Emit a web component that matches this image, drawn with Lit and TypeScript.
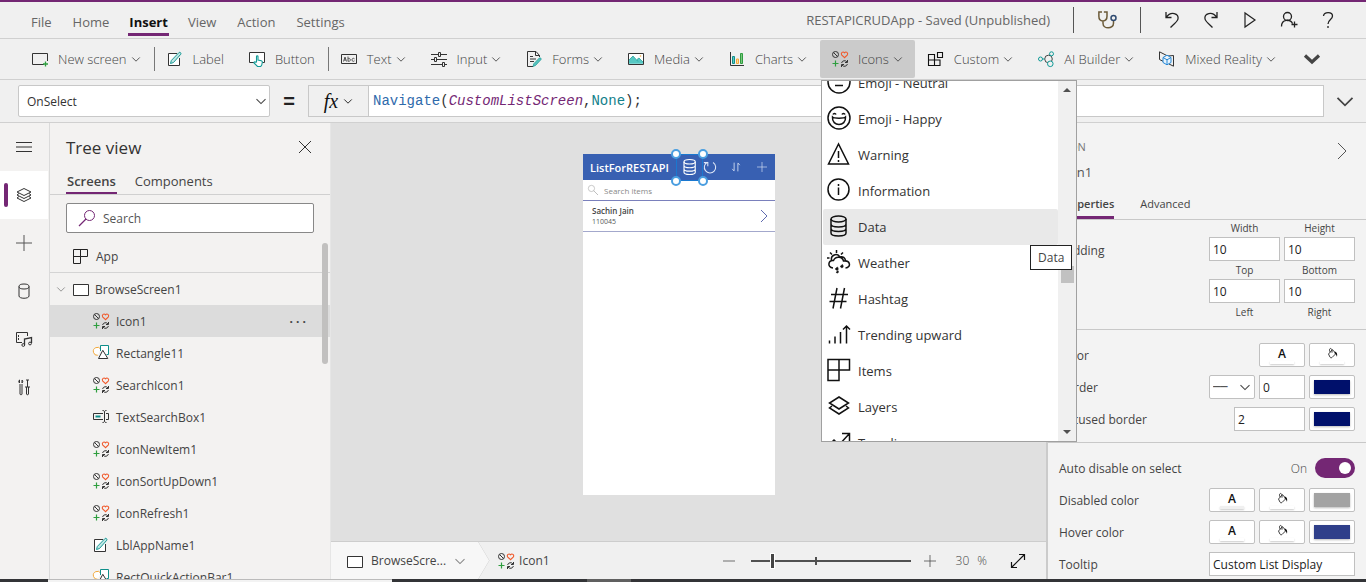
import { LitElement, html, svg, css, nothing } from "lit";
import { customElement, property, state } from "lit/decorators.js";
import { classMap } from "lit/directives/class-map.js";

const paths: Record<string, any> = {
  screen: svg`<path d="M.5 3.500h15v11H.5z" fill="#fff" stroke="#333"/>`,
  newScreen: svg`<path d="M12 13.500H.5V2.500h15V10" fill="none" stroke="#333"/><path d="M13.500 10.500v5M11 13h5" stroke="#2e9e3f" stroke-width="1.300"/>`,
  label: svg`<path d="M10 2.500H1.500v12h11V7" fill="#fff" stroke="#333"/><path d="M3.500 12.500l.8-3L12 1.500c1-.8 2.500.6 1.800 1.700L6.500 11.500z" fill="#bfe6e4" stroke="#1b9a96"/>`,
  button: svg`<path d="M5 11.500H.5v-10h15v10H13" fill="#fff" stroke="#333"/><path d="M7.500 11V5.500c0-1 1.500-1 1.500 0V9l3.300.8c.8.3 1.200.8 1 1.700l-.6 2.500-1 1.500H8.500L5 12c-.3-1 .7-1.400 1.300-.9z" fill="#fff" stroke="#0f9a96" stroke-width="1.100"/>`,
  text: svg`<path d="M.5 3.500h15v9H.5z" fill="none" stroke="#333"/><path d="M2.500 10.500L4 6l1.500 4.500M3 9h2M7 5.500v5M7 8c1-1.200 2.300-.6 2.300.8S8 11 7 9.800M13.500 7.800c-1.500-1.200-2.700 0-2.500 1.200.1 1.300 1.500 1.900 2.500.8" fill="none" stroke="#555"/>`,
  input: svg`<path d="M0 3.500h7M10 3.500h6M0 8.500h3M6 8.500h10M0 13.500h11M14 13.500h2" stroke="#333"/><path d="M7.500 1.500h2v4h-2zM3.500 6.500h2v4h-2zM11.500 11.500h2v4h-2z" fill="none" stroke="#333"/>`,
  forms: svg`<path d="M13.500 6V4.500L10 .5H1.500v15H7M9.500.5v4h4M4 5.500h3M4 8h6M4 10.500h4" fill="none" stroke="#333"/><path d="M7 15.500l.8-2.800 5.500-5.700c1-.7 2.400.5 1.700 1.600l-5.400 5.800z" fill="#56c3bd" stroke="#1b9a96" stroke-width=".7"/>`,
  media: svg`<path d="M.5 2.500h15v11H.5z" fill="#fff" stroke="#333"/><path d="M1 12.800V9l4-4 3.500 4L11 7l4 4v1.800z" fill="#56c8c3"/><path d="M1 9l4-4 5 5.500M9 8.500L11 7l4 4" fill="none" stroke="#1b9a96" stroke-width=".7"/><circle cx="12.500" cy="5" r=".8" fill="#f2a93b"/>`,
  charts: svg`<path d="M1.500 1v13.500H15" fill="none" stroke="#333"/><path d="M3.500 5.500h2v7h-2z" fill="#56c8c3" stroke="#118f8a"/><path d="M7.500 8h2v4.500h-2z" fill="#fcd79b" stroke="#f2a93b"/><path d="M11.500 2.500h2v10h-2z" fill="#7cc47f" stroke="#2e9e3f"/>`,
  icons: svg`<circle cx="3.500" cy="3.500" r="3" fill="none" stroke="#333"/><path d="M1.500 1.500l4 4" stroke="#333"/><path d="M12.500 6.700L9.600 3.800C8.600 2 10.800-.1 12.500 1.800c1.700-1.900 3.900.2 2.900 2z" fill="none" stroke="#f0592b" stroke-width="1.100"/><path d="M3.500 9.500v6M.5 12.500h6" stroke="#2e9e3f" stroke-width="1.200"/><path d="M9.600 12a3 3 0 0 1 5.400-1M15.500 9v2.500H13M15.400 13a3 3 0 0 1-5.400 1M9.500 16v-2.500H12" fill="none" stroke="#333"/>`,
  custom: svg`<path d="M.5 3.500h6v11h-6zM.5 9h11.500v5.500H.5M6.500 9H12v5.500M9.500 1.500h5v5h-5z" fill="none" stroke="#111" stroke-width="1.100"/>`,
  ai: svg`<circle cx="10.500" cy="8" r="3.800" fill="none" stroke="#444"/><circle cx="2.500" cy="8" r="2" fill="#f0f0f0" stroke="#0f9a96"/><circle cx="13.500" cy="2.800" r="2" fill="#f0f0f0" stroke="#0f9a96"/><circle cx="12.300" cy="12.800" r="2.800" fill="#f0f0f0" stroke="#0f9a96"/><path d="M4.500 8h2" stroke="#0f9a96"/>`,
  mixed: svg`<path d="M4.500 10.500l-4-2V.8L9 5.200M9 5l5.500-.5v10.700L10 13" fill="none" stroke="#333"/><path d="M4 6.500l4-2.300 4 2.300v5l-4 2.300-4-2.300zM4 6.500l4 2.300 4-2.300M8 8.800v5" fill="#e8f3fb" stroke="#2488d8"/>`,
  rect: svg`<path d="M4.800 10.300a4 4 0 1 1 3-6" fill="#fff" stroke="#f2a93b"/><path d="M7.500 6V.5h8v9h-2" fill="#fff" stroke="#0f8f8a"/><path d="M5.500 13.500l4.300-8.200 5 8.200z" fill="#fff" stroke="#333"/>`,
  textbox: svg`<path d="M10 4.500H.5v6H10M13 4.500h2.500v6H13M9.500 1.500c1.300 0 2 .4 2 1.200v9.600c0 .8-.7 1.200-2 1.200M13.500 1.500c-1.300 0-2 .4-2 1.200M13.500 13.500c-1.300 0-2-.4-2-1.200" fill="none" stroke="#333"/><path d="M2.500 7.500h5" stroke="#0f8f8a" stroke-width="2"/>`,
  app: svg`<path d="M.5.5h14v7h-7v7h-7zM7.500.5v7M.5 7.500h7" fill="none" stroke="#222"/>`,
  chevron: svg`<path d="M2 5.500l6 6 6-6" fill="none" stroke="currentColor" stroke-width="1.400"/>`,
  chevronBold: svg`<path d="M1 4.500l7 6.500 7-6.500" fill="none" stroke="#444" stroke-width="3.200"/>`,
  right: svg`<path d="M4 0l8 8-8 8" fill="none" stroke="currentColor"/>`,
  close: svg`<path d="M2 2l12 12M14 2L2 14" stroke="#333"/>`,
  plus: svg`<path d="M8 0v16M0 8h16" stroke="currentColor"/>`,
  minus: svg`<path d="M0 8h16" stroke="currentColor"/>`,
  search: svg`<circle cx="10.500" cy="5.500" r="5" fill="none" stroke="currentColor"/><path d="M7 9l-7 7" stroke="currentColor" stroke-width="1.200"/>`,
  menu: svg`<path d="M0 3.500h16M0 8h16M0 12.500h16" stroke="#333" stroke-width="1.100"/>`,
  layers: svg`<path d="M8 1.500l7 3.500-7 3.500L1 5zM3 6.500L1 8l7 3.500L15 8l-2-1.500M3 9.500L1 11l7 3.500 7-3.500-2-1.500" fill="none" stroke="#333"/>`,
  cylinder: svg`<ellipse cx="8" cy="3.500" rx="5" ry="2.500" fill="none" stroke="#333"/><path d="M3 3.500v9.500c0 3 10 3 10 0V3.500" fill="none" stroke="#333"/>`,
  mediaRail: svg`<path d="M6 11.500H.5v-10h11V5M2.500 3v7" fill="none" stroke="#333"/><path d="M2.500 3v7" stroke="#f3f2f1" stroke-dasharray="1 2"/><path d="M8.500 14V8l7-1.500v5.500" fill="none" stroke="#333" stroke-width="1.300"/><circle cx="7.300" cy="14" r="1.400" fill="none" stroke="#333"/><circle cx="14" cy="12.500" r="1.400" fill="none" stroke="#333"/>`,
  tools: svg`<path d="M3.500 1v3M6 1v3M3.500 4c-1-1-1-2.500 0-3M6 4c1-1 1-2.500 0-3M4 5v10c0 1 2 1 2 0V5M10 1h3M11.500 1v7M9 8h5M10.500 8v7c0 1 2 1 2 0V8" fill="none" stroke="#333"/>`,
  health: svg`<path d="M4 1.500H1.500V5c0 5 6.500 5 6.500 0V1.500H5.500M4.800 9v1.500c0 5 8.400 5 8.400 0V8.500" fill="none" stroke="#6b5a38" stroke-width="1.200"/><circle cx="13.200" cy="6.300" r="2" fill="none" stroke="#2f4a70" stroke-width="1.200"/>`,
  undo: svg`<path d="M2 0v5.500h5.500M2 5.500C7-1.500 15 1.500 14 7c-.5 2.500-5 6-7.500 8.500" fill="none" stroke="#222" stroke-width="1.300"/>`,
  redo: svg`<path d="M14 0v5.500H8.500M14 5.500C9-1.500 1 1.500 2 7c.5 2.500 5 6 7.500 8.500" fill="none" stroke="#222" stroke-width="1.300"/>`,
  play: svg`<path d="M3 1v14l10-7z" fill="none" stroke="#222" stroke-width="1.200"/>`,
  person: svg`<circle cx="6.500" cy="4.500" r="4" fill="none" stroke="#222" stroke-width="1.300"/><path d="M.5 14.500c0-8 9-7.500 11-3M13.500 9.500v6M10.500 12.500h6" fill="none" stroke="#222" stroke-width="1.300"/>`,
  help: svg`<path d="M3.500 4C4-.5 12.500-.5 12.500 4c0 3.500-4.500 3.500-4.500 8M8 14v2" fill="none" stroke="#222" stroke-width="1.300"/>`,
  expand: svg`<path d="M2 14L14 2M9 1.500h5.500V7M1.500 9v5.500H7" fill="none" stroke="#111" stroke-width="1.200"/>`,
  bucket: svg`<path d="M4 8l4.500-5 4 4.500L8 12c-1 .6-1.700.3-2.300-.4zM6 6C3.500 2 7 0 8 3.500v3" fill="none" stroke="#222"/><path d="M11 5c2.500.5 3.500 2.500 2.700 6-1-1-.7-3-2.700-3.500z" fill="#111"/>`,
  refresh: svg`<path d="M5 2.500a6.500 6.500 0 1 0 6.500.3M1 3h4.500v4" fill="none" stroke="currentColor" stroke-width="1.200"/>`,
  sort: svg`<path d="M5 1v13M2 11l3 3.500M11 15V2M14 5l-3-3.500" fill="none" stroke="currentColor" stroke-width="1.300"/>`,
};

const bigPaths: Record<string, any> = {
  neutral: svg`<circle cx="12" cy="12" r="11"/><path d="M8 15.500h8M7 8.500h2M15 8.500h2"/>`,
  happy: svg`<circle cx="12" cy="12" r="11"/><path d="M5.500 11c1.500 1.500 11.500 1.500 13 0 1 10-14 10-13 0zM6 8.500c.5-1.500 2.500-1.500 3 0M15 8.500c.5-1.500 2.500-1.500 3 0"/>`,
  warning: svg`<path d="M11.500 2L1.500 22h20zM11.500 9v7M11.500 18v2"/>`,
  info: svg`<circle cx="11.500" cy="11.500" r="10.500"/><path d="M11.500 9.500v7.500M11.500 6v2"/>`,
  data: svg`<ellipse cx="11.500" cy="5" rx="7.500" ry="3"/><path d="M4 5v14c0 4 15 4 15 0V5M4 10c0 4 15 4 15 0M4 14.500c0 4 15 4 15 0"/>`,
  weather: svg`<path d="M6 18c-6-.5-5-8 .5-7.500 2-5 9-4 10 .5 7-1 8 6.500 2 7M4.500 10C3.500 5 10 2.500 13 7c3-1 5 1 5.500 3.500M9.500 0v3M3 2.500l2 2M0 8h2.500M16 2.500l-2 2"/><path d="M10.500 17c2.500 4-2.500 4-2 1.500zM15.500 14.500c2.500 4-2.500 4-2 1.500zM11 20.500c1.700 3-2 3-1.700 1.500z" fill="#111" stroke-width=".6"/>`,
  hashtag: svg`<path d="M10 2L6 22.500M17.500 2l-4 20.500M4 8.500h17M2.500 15.500h17"/>`,
  upward: svg`<path d="M2.500 18.500v3M8 14.500v7M13.500 10v11.500M19.500 21.500V4M16 7.500L19.500 4 23 7.500"/>`,
  items: svg`<path d="M1 1.500h21.500v10.500H12v10.500H1zM12 1.500V12M1 12h11"/>`,
  layers: svg`<path d="M12 3l9.500 6-9.500 6L2.500 9zM5 12l-2.500 2 9.500 6 9.500-6L19 12"/>`,
  trending: svg`<path d="M1 16l6-6 5 5L22 4M15 3.500h7.500V11"/>`,
};

const glyph = (name: string, cls = "g") =>
  html`<svg class=${cls} viewBox="0 0 16 16" aria-hidden="true">${paths[name]}</svg>`;

const base = css`
  :host, * { box-sizing: border-box; }
  button, input, select { font: inherit; color: inherit; border-radius: 0; margin: 0; }
  button { border: 0; background: none; padding: 0; display: flex; align-items: center; }
  ul { list-style: none; margin: 0; padding: 0; }
  h1, h2, p { margin: 0; font-weight: 400; }
  svg { display: block; flex: none; overflow: visible; }
  .g { width: 16px; height: 16px; }
  .s14 { width: 14px; height: 14px; }
  .s12 { width: 12px; height: 12px; }
  .s10 { width: 10px; height: 10px; }
  .s20 { width: 20px; height: 20px; }
`;

@customElement("icon-menu")
class IconMenu extends LitElement {
  static styles = [base, css`
    :host { display: flex; width: 256px; height: 362px; border: 1px solid #a0a0a0; background: #fff; position: relative; }
    .view { flex: 1; overflow: hidden; padding-left: 1px; }
    .list { margin-top: -16px; }
    .item { width: 100%; height: 36px; padding-left: 4px; gap: 7px; font-size: 13px; color: #333; border-radius: 2px; }
    .active { background: #e9e9e9; }
    .pic { width: 24px; height: 24px; fill: none; stroke: #111; stroke-width: 1.5; margin-top: -2px; }
    .bar { width: 18px; background: #f0f0f0; display: flex; flex-direction: column; align-items: center; padding: 7px 0; }
    .up, .down { border: 4px solid transparent; }
    .up { border-top: 0; border-bottom-color: #505050; }
    .down { border-bottom: 0; border-top-color: #505050; margin-top: auto; }
    .thumb { width: 13px; height: 17px; background: #c1c1c1; margin-top: 174px; }
    .tip { position: absolute; left: 208px; top: 164px; border: 1px solid #222; background: #fff; height: 25px; padding: 0 7px; font-size: 12px; line-height: 23px; color: #444; }
  `];
  private entries = [
    ["neutral", "Emoji - Neutral"], ["happy", "Emoji - Happy"], ["warning", "Warning"],
    ["info", "Information"], ["data", "Data"], ["weather", "Weather"], ["hashtag", "Hashtag"],
    ["upward", "Trending upward"], ["items", "Items"], ["layers", "Layers"], ["trending", "Trending"],
  ];
  render() {
    return html`
      <div class="view"><ul class="list">
        ${this.entries.map(([k, t]) => html`<li><button class=${classMap({ item: true, active: k === "data" })}>
          <svg class="pic" viewBox="0 0 24 24" aria-hidden="true">${bigPaths[k]}</svg><span>${t}</span></button></li>`)}
      </ul></div>
      <div class="bar"><i class="up"></i><i class="thumb"></i><i class="down"></i></div>
      <div class="tip" role="tooltip">Data</div>`;
  }
}

@customElement("command-bar")
class CommandBar extends LitElement {
  static styles = [base, css`
    :host { display: flex; align-items: stretch; height: 41px; padding-left: 20px; background: #f0f0f0; border-bottom: 1px solid #d0d0d0; color: #444; font-size: 13px; font-weight: 300; flex: none; }
    .slot { position: relative; display: flex; align-items: center; margin-right: 1px; }
    .cmd { height: 38px; padding: 0 12px; gap: 10px; white-space: nowrap; }
    .word { display: flex; align-items: center; gap: 4px; }
    .open { background: #cbcbcb; border-radius: 2px; }
    .rule { width: 1px; height: 24px; background: #777; align-self: center; }
    .more { padding: 0 15px; }
    .pop { position: absolute; left: 1px; top: 41px; z-index: 5; font-weight: 400; }
  `];
  private commands = [
    ["newScreen", "New screen", 1], ["rule"], ["label", "Label", 0], ["button", "Button", 0], ["rule"],
    ["text", "Text", 1], ["input", "Input", 1], ["forms", "Forms", 1], ["media", "Media", 1],
    ["charts", "Charts", 1], ["icons", "Icons", 1], ["custom", "Custom", 1], ["ai", "AI Builder", 1], ["mixed", "Mixed Reality", 1],
  ] as [string, string?, number?][];
  render() {
    return html`${this.commands.map(([icon, text, more]) => icon === "rule"
      ? html`<span class="rule"></span>`
      : html`<div class="slot">
          <button class=${classMap({ cmd: true, open: icon === "icons" })}>${glyph(icon)}
            <span class="word">${text}${more ? glyph("chevron", "s10") : nothing}</span></button>
          ${icon === "icons" ? html`<icon-menu class="pop"></icon-menu>` : nothing}
        </div>`)}
      <button class="more" aria-label="More commands">${glyph("chevronBold")}</button>`;
  }
}

@customElement("tree-panel")
class TreePanel extends LitElement {
  static styles = [base, css`
    :host { display: flex; width: 331px; min-height: 0; background: #f3f2f1; color: #444; font-size: 12px; }
    .rail { width: 50px; border-right: 1px solid #dadada; flex: none; }
    .tool { width: 48px; height: 48px; justify-content: center; color: #555; position: relative; }
    .current { background: #fff; }
    .current::before { content: ""; position: absolute; left: 4px; top: 12px; width: 4px; height: 24px; border-radius: 2px; background: #742774; }
    .panel { flex: 1; min-width: 0; display: flex; flex-direction: column; border-right: 1px solid #e6e6e6; }
    .head { display: flex; justify-content: space-between; align-items: center; height: 48px; padding: 0 17px 0 16px; }
    .title { font-size: 17px; font-weight: 500; color: #333; }
    .tabs { display: flex; gap: 17px; height: 24px; padding-left: 16px; border-bottom: 1px solid #d0d0d0; font-size: 13px; }
    .tab { align-items: flex-start; line-height: 20px; padding: 0 1px; border-bottom: 2px solid transparent; }
    .on { font-weight: 600; border-color: #742774; }
    .find { display: flex; align-items: center; gap: 8px; height: 30px; margin: 8px 16px; padding: 0 12px; background: #fff; border: 1px solid #888; border-radius: 2px; color: #742774; }
    .query { flex: 1; min-width: 0; border: 0; outline: 0; background: none; padding: 0; }
    .query::placeholder { color: #555; opacity: 1; }
    .body { flex: 1; min-height: 0; overflow: hidden; display: flex; position: relative; }
    .rows { flex: 1; min-width: 0; }
    .row { width: 100%; height: 32px; padding-left: 43px; gap: 7px; }
    .app { padding-left: 23px; border-bottom: 1px solid #d4d4d4; }
    .root { padding-left: 6px; gap: 6px; }
    .root .s10 { color: #888; margin-right: 1px; }
    .sel { background: #dcdcdc; }
    .dots { margin-left: auto; padding-right: 24px; font-weight: 700; }
    .thumb { position: absolute; right: 2px; top: 2px; width: 6px; height: 121px; background: #c1c0bf; border-radius: 3px; }
  `];
  @property() filter = "";
  private controls = [
    ["icons", "Icon1"], ["rect", "Rectangle11"], ["icons", "SearchIcon1"], ["textbox", "TextSearchBox1"],
    ["icons", "IconNewItem1"], ["icons", "IconSortUpDown1"], ["icons", "IconRefresh1"], ["label", "LblAppName1"], ["rect", "RectQuickActionBar1"],
  ];
  render() {
    return html`
      <nav class="rail">${["menu", "layers", "plus", "cylinder", "mediaRail", "tools"].map(n =>
        html`<button class=${classMap({ tool: true, current: n === "layers" })} aria-label=${n}>${glyph(n)}</button>`)}</nav>
      <section class="panel">
        <div class="head"><h2 class="title">Tree view</h2><button aria-label="Close">${glyph("close")}</button></div>
        <div class="tabs"><button class="tab on">Screens</button><button class="tab">Components</button></div>
        <label class="find">${glyph("search")}<input class="query" placeholder="Search" aria-label="Search" .value=${this.filter}></label>
        <div class="body">
          <div class="rows">
            <button class="row app">${glyph("app")}App</button>
            <button class="row root">${glyph("chevron", "s10")}${glyph("screen")}BrowseScreen1</button>
            ${this.controls.map(([i, t], n) => html`<button class=${classMap({ row: true, sel: n === 0 })}>${glyph(i)}${t}${n === 0 ? html`<span class="dots">· · ·</span>` : nothing}</button>`)}
          </div>
          <span class="thumb"></span>
        </div>
      </section>`;
  }
}

@customElement("design-canvas")
class DesignCanvas extends LitElement {
  static styles = [base, css`
    :host { display: flex; flex-direction: column; min-width: 0; background: #e0e0e0; color: #444; font-size: 12px; }
    .stage { flex: 1; display: flex; align-items: center; justify-content: center; padding: 0 19px 15px 0; }
    .phone { width: 192px; height: 341px; background: #fff; }
    .bar { display: flex; align-items: center; height: 26px; padding-left: 7px; background: #3860b2; color: #fff; }
    .name { font-size: 11px; font-weight: 600; flex: 1; white-space: nowrap; }
    .tools { display: grid; grid-template-columns: 27px 13px 33px 26px; align-items: center; color: #dfe7f7; }
    .cell { display: flex; justify-content: center; }
    .sorter { padding-left: 7px; }
    .picked { position: relative; height: 27px; align-items: center; border: 1px solid #1a78d0; }
    .db { width: 18px; height: 20px; fill: none; stroke: #fff; stroke-width: 1.5; }
    .knob { position: absolute; width: 10px; height: 10px; border: 2px solid #4a9ee0; border-radius: 50%; background: #fff; }
    .tl { left: -6px; top: -6px; } .tr { right: -6px; top: -6px; }
    .bl { left: -6px; bottom: -6px; } .br { right: -6px; bottom: -6px; }
    .search { display: flex; align-items: center; gap: 6px; height: 21px; padding-left: 5px; border-bottom: 1px solid #7a80bc; color: #aaa; }
    .search .s10 { transform: scaleX(-1); }
    .box { width: 120px; border: 0; padding: 0; background: none; font-size: 8px; }
    .box::placeholder { color: #888; opacity: 1; }
    .row { display: flex; width: 100%; height: 31px; padding: 0 5px 0 9px; justify-content: space-between; border-bottom: 1px solid #a3a8cc; text-align: left; font-size: 8px; line-height: 11px; color: #2b3a94; }
    .who { display: block; font-weight: 600; color: #444; }
    .num { display: block; font-size: 7px; color: #555; }
    .foot { display: flex; align-items: center; height: 38px; border-top: 1px solid #cdcdcd; background: #f0f0f0; padding-right: 20px; }
    .crumb { height: 100%; padding: 0 23px 0 16px; gap: 8px; background: #f7f7f7; clip-path: polygon(0 0, calc(100% - 11px) 0, 100% 50%, calc(100% - 11px) 100%, 0 100%); }
    .crumb .s12 { color: #888; }
    .edge { width: 12px; height: 37px; margin-left: -11px; fill: none; stroke: #d0d0d0; }
    .leaf { gap: 5px; margin-left: 8px; }
    .zoom { margin-left: auto; display: flex; align-items: center; }
    .range { -webkit-appearance: none; appearance: none; width: 160px; height: 20px; margin: 0 13px 0 16px; background: linear-gradient(#505050, #505050) 64px 50% / 2px 8px no-repeat, linear-gradient(#505050, #505050) 0 50% / 100% 2px no-repeat; }
    .range::-webkit-slider-thumb { -webkit-appearance: none; width: 3px; height: 14px; background: #444; border: 0; outline: 1px solid #fff; }
    .pct { display: flex; gap: 8px; margin: 0 23px 0 20px; font-weight: 300; }
  `];
  render() {
    return html`
      <div class="stage"><div class="phone">
        <div class="bar"><span class="name">ListForRESTAPI</span>
          <div class="tools">
            <span class="cell picked"><svg class="db" viewBox="0 0 24 24">${bigPaths.data}</svg>
              <i class="knob tl"></i><i class="knob tr"></i><i class="knob bl"></i><i class="knob br"></i></span>
            <span class="cell">${glyph("refresh", "s14")}</span>
            <span class="cell sorter">${glyph("sort", "s10")}</span>
            <span class="cell">${glyph("plus", "s10")}</span>
          </div></div>
        <label class="search">${glyph("search", "s10")}<input class="box" placeholder="Search items" aria-label="Search items"></label>
        <button class="row"><span><span class="who">Sachin Jain</span><span class="num">110045</span></span>${glyph("right", "s12")}</button>
      </div></div>
      <div class="foot">
        <button class="crumb">${glyph("screen")}BrowseScre...${glyph("chevron", "s12")}</button>
        <svg class="edge" viewBox="0 0 12 37"><path d="M0 0l11 18.500L0 37"/></svg>
        <button class="leaf">${glyph("icons")}Icon1</button>
        <div class="zoom">
          <button aria-label="Zoom out">${glyph("minus", "s12")}</button>
          <input class="range" type="range" min="10" max="163" value="30" aria-label="Zoom">
          <button aria-label="Zoom in">${glyph("plus", "s12")}</button>
          <span class="pct"><span>30</span><span>%</span></span>
          <button aria-label="Fit to window">${glyph("expand")}</button>
        </div>
      </div>`;
  }
}

@customElement("property-panel")
class PropertyPanel extends LitElement {
  static styles = [base, css`
    :host { display: flex; flex-direction: column; width: 320px; overflow: hidden; background: #f3f3f3; border-left: 2px solid #cbcbcb; color: #444; font-size: 12px; }
    .head, .tabs, .pads, .group { flex: none; }
    .head { display: flex; justify-content: space-between; align-items: flex-start; padding: 14px 16px 0 11px; height: 70px; color: #555; }
    .kind { color: #777; line-height: 20px; font-size: 11px; }
    .name { font-size: 13px; line-height: 30px; }
    .head .g { margin-top: 6px; }
    .tabs { display: flex; gap: 26px; height: 27px; padding-left: 11px; border-bottom: 1px solid #c8c8c8; font-size: 11px; }
    .tab { align-items: flex-start; line-height: 22px; border-bottom: 3px solid transparent; }
    .on { font-weight: 600; border-color: #742774; }
    .group { padding: 13px 11px 11px; display: flex; flex-direction: column; gap: 8px; border-bottom: 1px solid #c8c8c8; }
    .group:last-child { border: 0; padding-bottom: 0; }
    .pads { display: grid; grid-template-columns: 1fr 71px 71px; column-gap: 4px; padding: 0 11px 8px; margin-top: -1px; border-bottom: 1px solid #c8c8c8; }
    .cap { grid-row: span 2; line-height: 27px; }
    .side { display: flex; flex-direction: column; font-size: 10px; line-height: 18px; text-align: center; }
    .side .field { font-size: 12px; }
    .line { display: flex; align-items: center; justify-content: flex-end; gap: 4px; height: 24px; white-space: nowrap; }
    .line > :first-child { margin-right: auto; }
    .field { width: 71px; height: 24px; border: 1px solid #c0c0c0; background: #fff; padding: 0 3px; outline: 0; color: #222; }
    .short { width: 46px; }
    .wide { width: 146px; }
    .chip { width: 46px; height: 24px; border: 1px solid #c0c0c0; border-radius: 2px; background: #fff; flex-direction: column; justify-content: center; color: #111; font-weight: 600; line-height: 15px; }
    .chip::after { content: ""; width: 24px; height: 3px; background: #fff; box-shadow: 0 1px 2px #ccc; }
    .full::after { width: 36px; height: 14px; box-shadow: 0 1px 2px #bbb; }
    .navy::after { background: #00106b; }
    .grey::after { background: #a3a3a3; }
    .blue::after { background: #2f3f8a; }
    .tinted::after { background: #f0f0f0; }
    .pick { display: grid; width: 46px; height: 24px; }
    .pick > * { grid-area: 1 / 1; }
    .style { appearance: none; border: 1px solid #c0c0c0; border-radius: 2px; background: #fff; padding: 0 3px; width: 46px; font-family: "DejaVu Sans Mono", monospace; }
    .pick .s12 { justify-self: end; align-self: center; margin-right: 4px; pointer-events: none; }
    .on-text { margin-right: 4px; font-weight: 300; }
    .switch { appearance: none; width: 40px; height: 20px; border-radius: 10px; background: #742774; display: flex; align-items: center; justify-content: flex-end; padding-right: 4px; }
    .switch::after { content: ""; width: 12px; height: 12px; border-radius: 50%; background: #fff; }
  `];
  private side(name: string) {
    return html`<label class="side"><input class="field" value="10">${name}</label>`;
  }
  private chips(fill: string, tinted = false) {
    return html`<button class=${classMap({ chip: true, tinted })} aria-label="Text color">A</button>
      <button class="chip" aria-label="Fill color">${glyph("bucket", "s14")}</button>
      ${fill ? html`<button class="chip full ${fill}" aria-label="Border color"></button>` : nothing}`;
  }
  render() {
    return html`
      <div class="head"><div><p class="kind">ICON</p><p class="name">Icon1</p></div><button aria-label="Collapse">${glyph("right")}</button></div>
      <div class="tabs"><button class="tab on">Properties</button><button class="tab">Advanced</button></div>
      <div class="pads">
        <span></span><span class="side">Width</span><span class="side">Height</span>
        <span class="cap">Padding</span>${this.side("Top")}${this.side("Bottom")}${this.side("Left")}${this.side("Right")}
      </div>
      <div class="group">
        <div class="line"><span>Color</span>${this.chips("")}</div>
        <div class="line"><span>Border</span>
          <span class="pick"><select class="style" aria-label="Border style"><option>──</option></select>${glyph("chevron", "s12")}</span>
          <input class="field short" value="0" aria-label="Border width"><button class="chip full navy" aria-label="Border color"></button></div>
        <div class="line"><span>Focused border</span><input class="field" value="2" aria-label="Focused border width"><button class="chip full navy" aria-label="Focused border color"></button></div>
      </div>
      <div class="group">
        <div class="line"><label for="auto">Auto disable on select</label><span class="on-text">On</span><input id="auto" class="switch" type="checkbox" role="switch" checked></div>
        <div class="line"><span>Disabled color</span>${this.chips("grey", true)}</div>
        <div class="line"><span>Hover color</span>${this.chips("blue")}</div>
        <div class="line"><label for="tip">Tooltip</label><input id="tip" class="field wide" value="Custom List Display"></div>
      </div>`;
  }
}

@customElement("app-root")
class AppRoot extends LitElement {
  static styles = [base, css`
    :host { display: flex; flex-direction: column; height: 100vh; overflow: hidden; background: #f0f0f0; border-top: 2px solid #742774; font-family: "Open Sans", "Noto Sans", sans-serif; color: #444; }
    .menu { display: flex; height: 37px; padding: 0 30px 0 29px; border-bottom: 1px solid #d0d0d0; font-size: 13px; color: #666; flex: none; }
    .tabs { display: flex; align-items: flex-start; gap: 17px; flex: 1; padding-top: 10px; }
    .tab { padding: 0 2px; line-height: 21px; border-bottom: 3px solid transparent; }
    .on { color: #111; font-weight: 700; border-color: #742774; padding: 0 1px; }
    .actions { display: flex; align-items: center; gap: 23px; }
    .mark { width: 1px; height: 26px; background: #555; }
    .formula { display: grid; grid-template-columns: 252px 38px 60px 1fr 42px; align-items: center; height: 43px; padding-left: 18px; border-bottom: 1px solid #d0d0d0; flex: none; }
    .prop { display: grid; }
    .prop > * { grid-area: 1 / 1; }
    .prop .s12 { justify-self: end; align-self: center; margin-right: 3px; pointer-events: none; }
    .which { appearance: none; height: 32px; border: 1px solid #c8c8c8; background: #fff; padding: 0 8px; font-size: 12px; color: #333; border-radius: 2px; }
    .eq { text-align: center; font: 700 20px "Liberation Sans", sans-serif; color: #222; }
    .fx { height: 32px; border: 1px solid #c8c8c8; border-right: 0; justify-content: center; gap: 5px; font: italic 20px "Liberation Serif", serif; color: #111; }
    .code { height: 32px; border: 1px solid #c8c8c8; background: #fff; padding-left: 4px; font: 14px/31px "Liberation Mono", monospace; white-space: nowrap; overflow: hidden; color: #333; }
    .fn { color: #2f6aab; } .id { color: #742774; font-style: italic; } .kw { color: #12808a; }
    .grow { justify-content: center; }
    .work { flex: 1; min-height: 0; display: grid; grid-template-columns: auto 1fr auto; grid-template-rows: minmax(0, 1fr); }
    .task { flex: none; height: 3px; display: flex; background: #333437; }
    .t1 { width: 48px; } .t2 { width: 344px; background: #f3f3f3; border-top: 1px solid #bbb; }
    .t3 { width: 195px; } .t4 { width: 44px; background: #606060; }
  `];
  @state() private tab = "Insert";
  render() {
    return html`
      <header class="menu">
        <nav class="tabs">${["File", "Home", "Insert", "View", "Action", "Settings"].map(t =>
          html`<button class=${classMap({ tab: true, on: t === this.tab })} @click=${() => (this.tab = t)}>${t}</button>`)}</nav>
        <div class="actions"><span>RESTAPICRUDApp - Saved (Unpublished)</span>
          <span class="mark"></span><button aria-label="App checker">${glyph("health", "s20")}</button><span class="mark"></span>
          <button aria-label="Undo">${glyph("undo")}</button><button aria-label="Redo">${glyph("redo")}</button>
          <button aria-label="Preview">${glyph("play")}</button><button aria-label="Share">${glyph("person")}</button><button aria-label="Help">${glyph("help")}</button></div>
      </header>
      <command-bar></command-bar>
      <div class="formula">
        <span class="prop"><select class="which" aria-label="Property"><option>OnSelect</option></select>${glyph("chevron", "s12")}</span>
        <span class="eq">=</span>
        <button class="fx">fx${glyph("chevron", "s10")}</button>
        <div class="code" role="textbox" aria-label="Formula" contenteditable="true" spellcheck="false"><span class="fn">Navigate</span>(<span class="id">CustomListScreen</span>,<span class="kw">None</span>);</div>
        <button class="grow" aria-label="Expand formula bar">${glyph("chevron", "s20")}</button>
      </div>
      <main class="work"><tree-panel></tree-panel><design-canvas></design-canvas><property-panel></property-panel></main>
      <div class="task"><i class="t1"></i><i class="t2"></i><i class="t3"></i><i class="t4"></i></div>`;
  }
}
